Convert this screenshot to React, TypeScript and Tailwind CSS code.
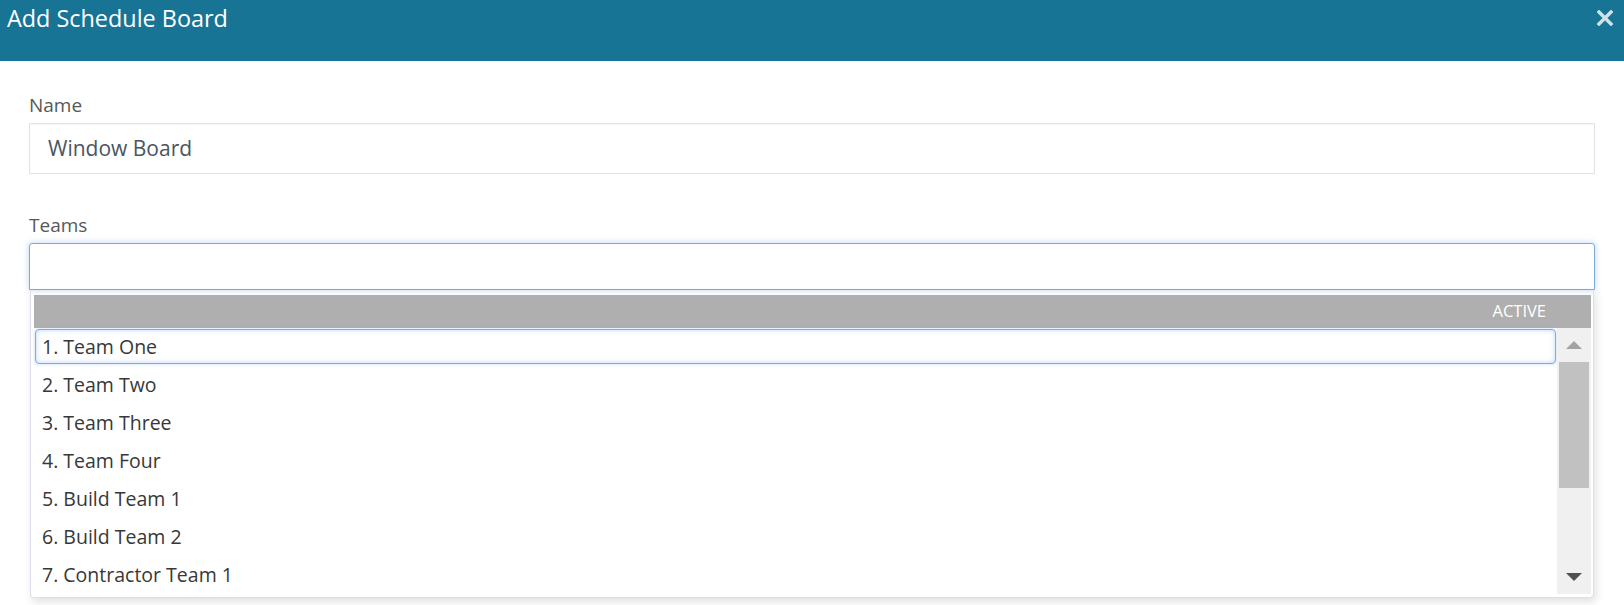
const teams = [
  "1. Team One",
  "2. Team Two",
  "3. Team Three",
  "4. Team Four",
  "5. Build Team 1",
  "6. Build Team 2",
  "7. Contractor Team 1",
];

function CloseIcon() {
  return (
    <svg width="16" height="16" viewBox="0 0 16 16" aria-hidden>
      <path d="M2 2 L14 14 M14 2 L2 14" stroke="#cfe1e9" strokeWidth="3.4" strokeLinecap="square" />
    </svg>
  );
}

export default function App() {
  return (
    <div className="w-[1624px] h-[605px] overflow-hidden bg-white font-['Open_Sans',sans-serif]">
      {/* Modal header */}
      <div className="h-[61px] bg-[#187494] flex items-start justify-between pl-[7px] pr-[11px]">
        <h1 className="text-[23.4px] leading-[30px] pt-[3px] text-white font-normal">Add Schedule Board</h1>
        <button className="mt-[10px]">
          <CloseIcon />
        </button>
      </div>

      {/* Form */}
      <div className="px-[29px]">
        <label className="block mt-[31px] mb-[5px] text-[19px] leading-[26px] text-[#585858]">Name</label>
        <div className="h-[51px] border border-[#e2e2ea] shadow-[inset_0_1px_1px_rgba(0,0,0,0.04)] flex items-center pl-[18px] text-[21px] text-[#4a5561]">
          Window Board
        </div>

        <label className="block mt-[38px] mb-[5px] text-[19px] leading-[26px] text-[#585858]">Teams</label>
        <div className="h-[47px] border border-[#7eaadb] rounded-t-[3px] shadow-[0_0_6px_rgba(102,160,225,0.45)]" />

        {/* Dropdown */}
        <div className="mx-[1px] border-x border-b border-[#dedee8] rounded-b-[4px] pl-[3px] pr-[2px] pt-[5px] pb-[3px] shadow-[2px_4px_8px_rgba(0,0,0,0.12)]">
          <div className="h-[33px] bg-[#afafaf] flex items-center justify-end pr-[45px]">
            <span className="text-[16.5px] text-white uppercase">Active</span>
          </div>
          <div className="flex h-[266px]">
            <div className="flex-1">
              {teams.map((t, i) => (
                <div key={t} className="h-[38px] px-[1px] pt-[1px] pb-[2px]">
                  <div
                    className={
                      i === 0
                        ? "h-full flex items-center pl-[6px] border border-[#7eaee0] rounded-[4px] shadow-[inset_0_0_5px_rgba(102,160,225,0.45),0_0_3px_rgba(102,160,225,0.45)] text-[19.5px] text-[#383838]"
                        : "h-full flex items-center pl-[6px] border border-transparent text-[19.5px] text-[#383838]"
                    }
                  >
                    {t}
                  </div>
                </div>
              ))}
            </div>
            {/* Scrollbar */}
            <div className="w-[34px] bg-[#f0f0f0] flex flex-col">
              <div className="h-[34px] flex items-center justify-center">
                <div className="w-0 h-0 border-x-[8px] border-x-transparent border-b-[8px] border-b-[#a3a3a3]" />
              </div>
              <div className="flex-1 px-[2px]">
                <div className="h-[126px] bg-[#c1c1c1]" />
              </div>
              <div className="h-[34px] flex items-center justify-center">
                <div className="w-0 h-0 border-x-[8px] border-x-transparent border-t-[8px] border-t-[#505050]" />
              </div>
            </div>
          </div>
        </div>
      </div>
    </div>
  );
}
